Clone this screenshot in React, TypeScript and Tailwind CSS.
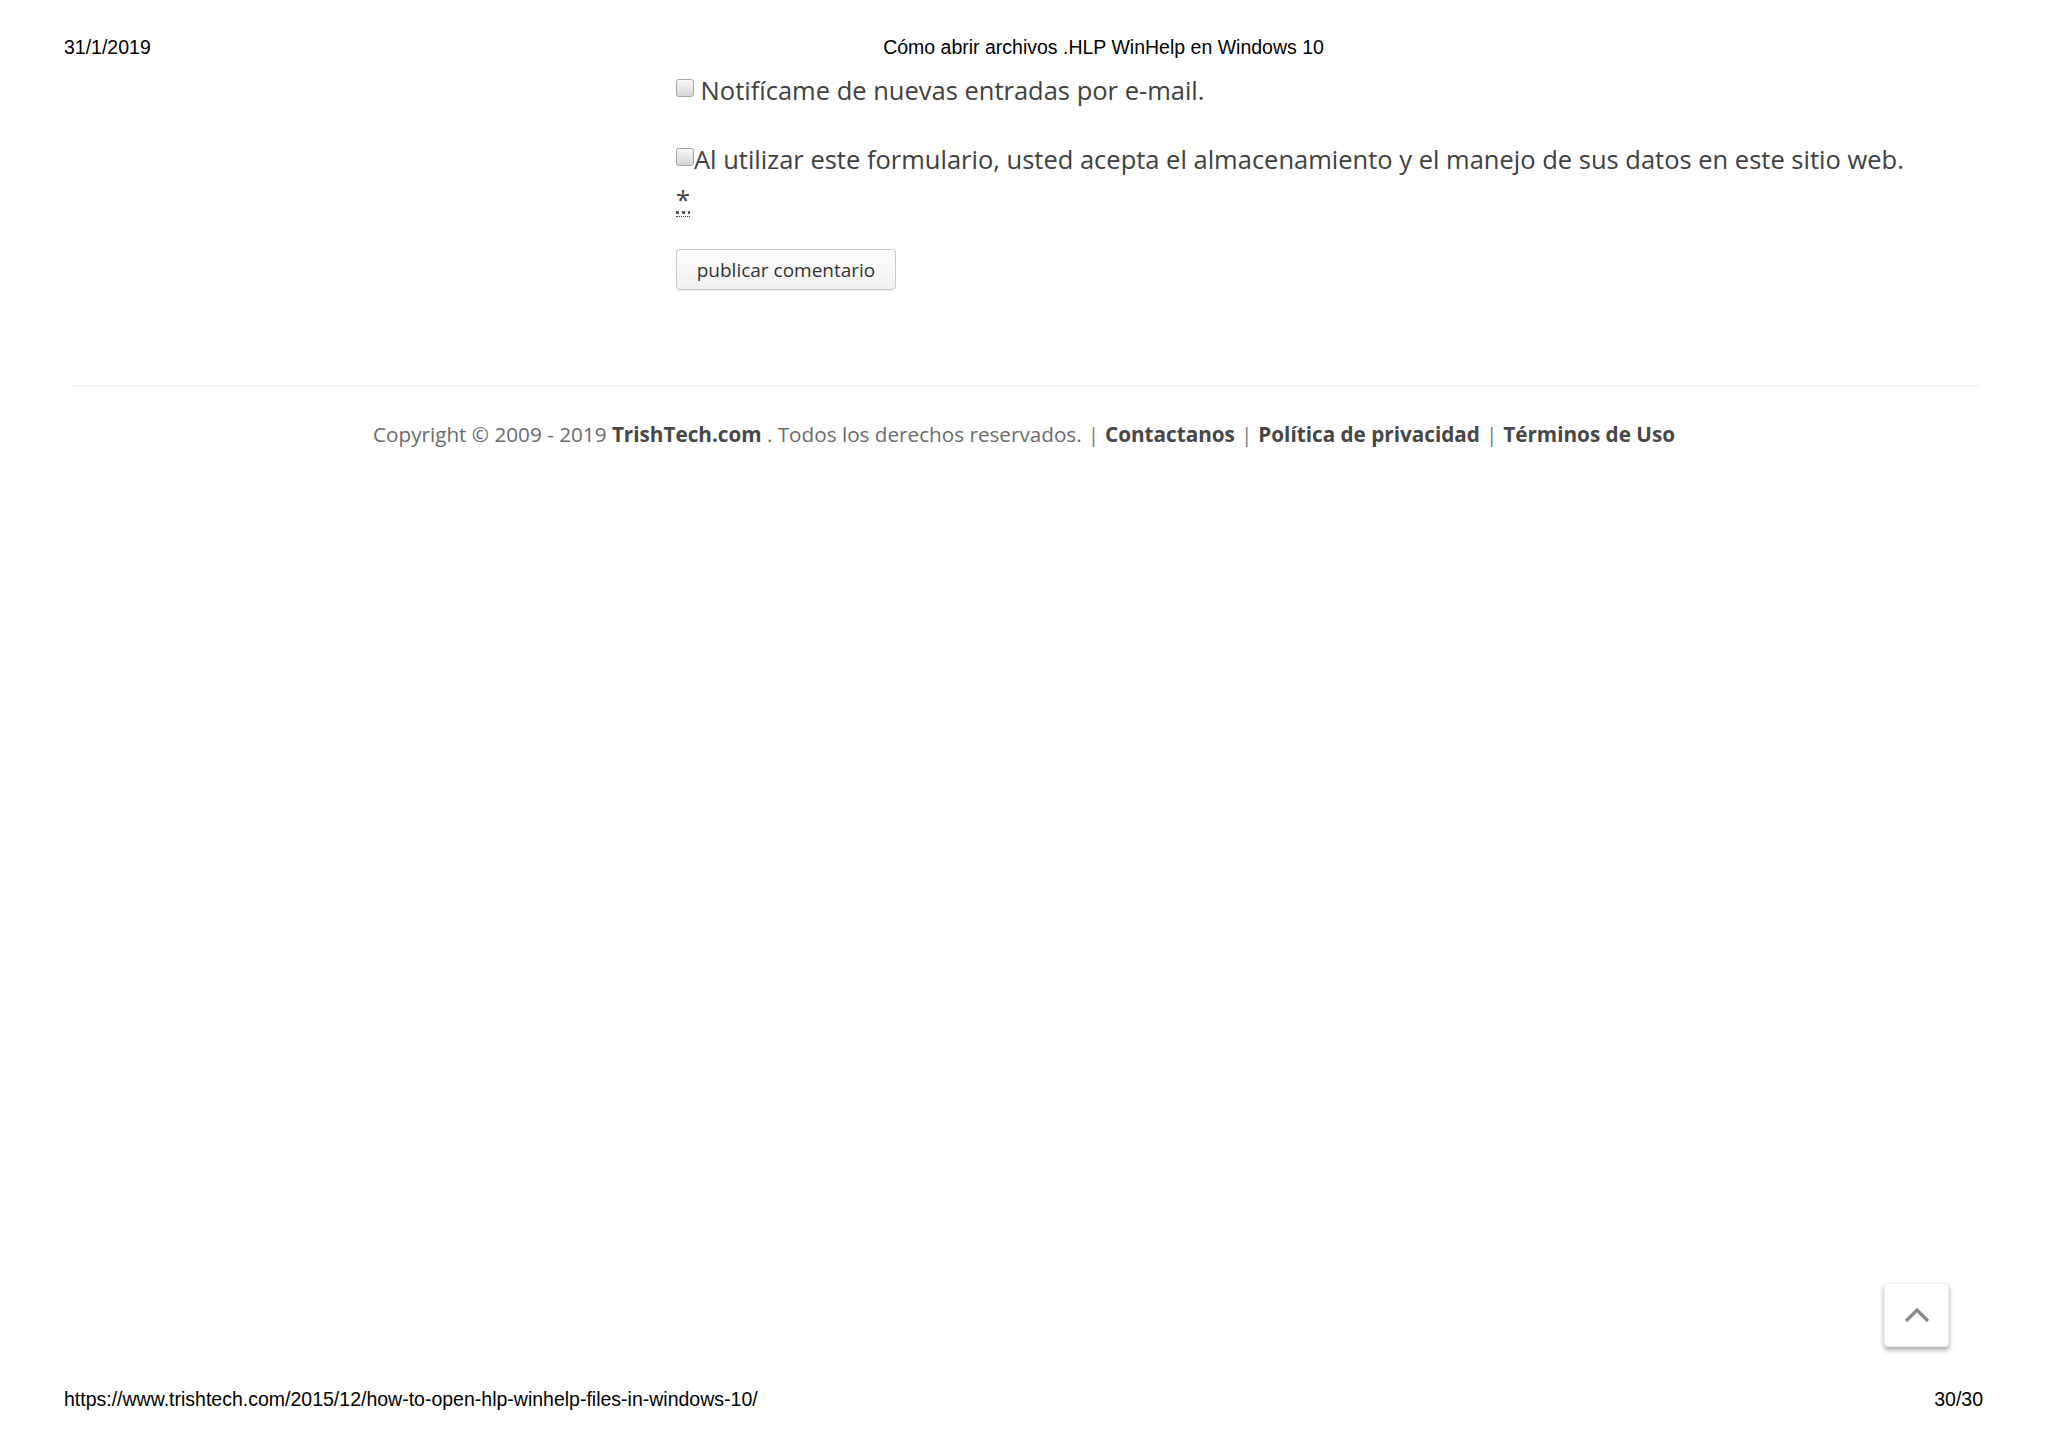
import React from "react";

const Check = () => (
  <input
    type="checkbox"
    readOnly
    className="appearance-none inline-block w-[18px] h-[18px] align-[3px] rounded-[3px] border border-[#a4a4a4] bg-gradient-to-b from-[#f8f8f8] to-[#d6d6d6] shadow-[inset_0_1px_1px_rgba(255,255,255,0.8)]"
  />
);

const Sep = () => <span className="text-[#7a7a7a] px-[6px]">|</span>;

export default function App() {
  return (
    <div className="relative h-[1447px] bg-white flex flex-col overflow-hidden">
      {/* print header */}
      <div className="flex pt-[36px] px-[64px] text-[19.5px] leading-[22px] text-black font-['Liberation_Sans',Arial,sans-serif]">
        <div className="w-[159px] shrink-0">31/1/2019</div>
        <div className="flex-1 text-center">Cómo abrir archivos .HLP WinHelp en Windows 10</div>
      </div>

      {/* comment form tail */}
      <div className="pl-[676px] pr-[64px] mt-[13px] text-[25.5px] leading-[38px] text-[#404040] font-['Open_Sans',sans-serif]">
        <p>
          <Check /> Notifícame de nuevas entradas por e-mail.
        </p>
        <p className="mt-[30px] leading-[40px]">
          <Check />
          Al utilizar este formulario, usted acepta el almacenamiento y el manejo de sus datos en este sitio web.{" "}
          <br />
          <abbr
            title="required"
            className="underline decoration-dotted border-b border-dotted border-[#404040]"
          >
            *
          </abbr>
        </p>
        <button className="mt-[30px] block w-[220px] h-[41px] rounded-[4px] border border-[#c8c8c8] bg-gradient-to-b from-white to-[#f0f0f0] text-[19px] leading-[24px] text-[#333] shadow-[0_1px_1px_rgba(0,0,0,0.08)]">
          publicar comentario
        </button>
      </div>

      {/* site footer */}
      <div className="mt-[95px] ml-[72px] mr-[68px] border-t border-[#efefef]" />
      <div className="mt-[33px] text-center text-[20.7px] leading-[30px] text-[#6b6b6b] font-['Open_Sans',sans-serif]">
        Copyright © 2009 - 2019 <b className="text-[#474747]">TrishTech.com</b> . Todos los derechos reservados.
        <Sep />
        <b className="text-[#474747]">Contactanos</b>
        <Sep />
        <b className="text-[#474747]">Política de privacidad</b>
        <Sep />
        <b className="text-[#474747]">Términos de Uso</b>
      </div>

      {/* back to top */}
      <div className="absolute left-[1884px] top-[1283px] w-[65px] h-[64px] rounded-[4px] bg-white border border-[#f0f0f0] shadow-[0_3px_5px_rgba(0,0,0,0.35)] flex items-center justify-center">
        <svg width="26" height="16" viewBox="0 0 26 16" fill="none">
          <path d="M2 14 L13 3 L24 14" stroke="#8a8a8a" strokeWidth="3.2" />
        </svg>
      </div>

      {/* print footer */}
      <div className="mt-auto pb-[37px] px-[64px] flex justify-between text-[19.5px] leading-[22px] text-black font-['Liberation_Sans',Arial,sans-serif]">
        <span>https://www.trishtech.com/2015/12/how-to-open-hlp-winhelp-files-in-windows-10/</span>
        <span className="pr-[1px]">30/30</span>
      </div>
    </div>
  );
}
